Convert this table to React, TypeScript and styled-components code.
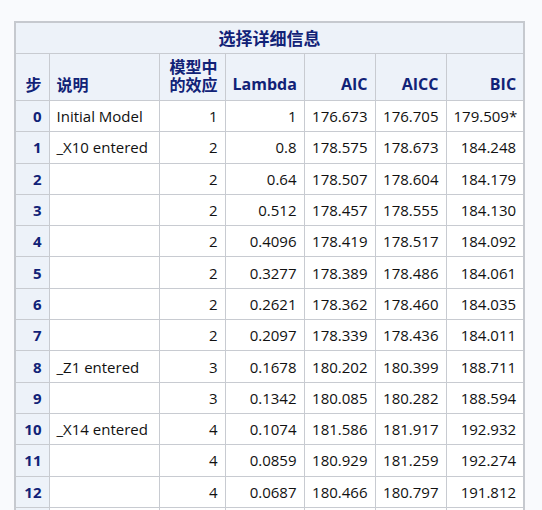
import React from "react";
import styled, { createGlobalStyle } from "styled-components";

const GlobalStyle = createGlobalStyle`
  html, body {
    margin: 0;
    padding: 0;
    background: #f9fafd;
  }
  body {
    font-family: "Open Sans", "Noto Sans CJK SC", sans-serif;
  }
`;

const Page = styled.div`
  padding: 21px 0 0 14px;
  height: 510px;
  box-sizing: border-box;
  overflow: hidden;
`;

const Table = styled.table`
  border-collapse: collapse;
  table-layout: fixed;
  width: 511px;
  border: 2px solid #c6c9cf;
  font-size: 15px;
  color: #111;
`;

const TitleCell = styled.th`
  height: 30px;
  padding: 0;
  background: #edf2f9;
  color: #112277;
  font-family: "Noto Sans CJK SC", sans-serif;
  font-weight: 700;
  font-size: 17px;
  line-height: 20px;
  text-align: center;
  vertical-align: middle;
  border: 1px solid #c8cbd1;
`;

const HeadCell = styled.th<{ $align?: "left" | "right"; $cjk?: boolean }>`
  height: 47px;
  box-sizing: border-box;
  padding: 0 7px 7px 7px;
  background: #edf2f9;
  color: #112277;
  font-family: ${(p) =>
    p.$cjk ? `"Noto Sans CJK SC", sans-serif` : `"Open Sans", "Noto Sans CJK SC", sans-serif`};
  font-weight: 700;
  font-size: 16px;
  line-height: 18px;
  text-align: ${(p) => p.$align ?? "right"};
  vertical-align: bottom;
  border: 1px solid #c8cbd1;
`;

const RowHead = styled.th`
  height: 30.3px;
  padding: 0 7px 0 0;
  background: #edf2f9;
  color: #112277;
  font-weight: 700;
  font-size: 15px;
  text-align: right;
  vertical-align: middle;
  border: 1px solid #c8cbd1;
`;

const DataCell = styled.td<{ $align?: "left" | "right" }>`
  height: 30.3px;
  padding: 0 7px;
  background: #ffffff;
  text-align: ${(p) => p.$align ?? "right"};
  vertical-align: middle;
  white-space: nowrap;
  border: 1px solid #c8cbd1;
`;

type Row = [string, string, string, string, string, string, string];

const rows: Row[] = [
  ["0", "Initial Model", "1", "1", "176.673", "176.705", "179.509*"],
  ["1", "_X10 entered", "2", "0.8", "178.575", "178.673", "184.248"],
  ["2", "", "2", "0.64", "178.507", "178.604", "184.179"],
  ["3", "", "2", "0.512", "178.457", "178.555", "184.130"],
  ["4", "", "2", "0.4096", "178.419", "178.517", "184.092"],
  ["5", "", "2", "0.3277", "178.389", "178.486", "184.061"],
  ["6", "", "2", "0.2621", "178.362", "178.460", "184.035"],
  ["7", "", "2", "0.2097", "178.339", "178.436", "184.011"],
  ["8", "_Z1 entered", "3", "0.1678", "180.202", "180.399", "188.711"],
  ["9", "", "3", "0.1342", "180.085", "180.282", "188.594"],
  ["10", "_X14 entered", "4", "0.1074", "181.586", "181.917", "192.932"],
  ["11", "", "4", "0.0859", "180.929", "181.259", "192.274"],
  ["12", "", "4", "0.0687", "180.466", "180.797", "191.812"],
];

const widths = [34, 110, 66, 79, 71, 71, 78];

export default function App() {
  return (
    <>
      <GlobalStyle />
      <Page>
        <Table>
          <colgroup>
            {widths.map((w, i) => (
              <col key={i} style={{ width: w }} />
            ))}
          </colgroup>
          <thead>
            <tr>
              <TitleCell colSpan={7}>选择详细信息</TitleCell>
            </tr>
            <tr>
              <HeadCell $cjk>步</HeadCell>
              <HeadCell $cjk $align="left">说明</HeadCell>
              <HeadCell $cjk>
                模型中
                <br />
                的效应
              </HeadCell>
              <HeadCell>Lambda</HeadCell>
              <HeadCell>AIC</HeadCell>
              <HeadCell>AICC</HeadCell>
              <HeadCell>BIC</HeadCell>
            </tr>
          </thead>
          <tbody>
            {rows.map((r) => (
              <tr key={r[0]}>
                <RowHead>{r[0]}</RowHead>
                <DataCell $align="left">{r[1]}</DataCell>
                <DataCell>{r[2]}</DataCell>
                <DataCell>{r[3]}</DataCell>
                <DataCell>{r[4]}</DataCell>
                <DataCell>{r[5]}</DataCell>
                <DataCell>{r[6]}</DataCell>
              </tr>
            ))}
            <tr>
              <RowHead />
              <DataCell />
              <DataCell />
              <DataCell />
              <DataCell />
              <DataCell />
              <DataCell />
            </tr>
          </tbody>
        </Table>
      </Page>
    </>
  );
}
